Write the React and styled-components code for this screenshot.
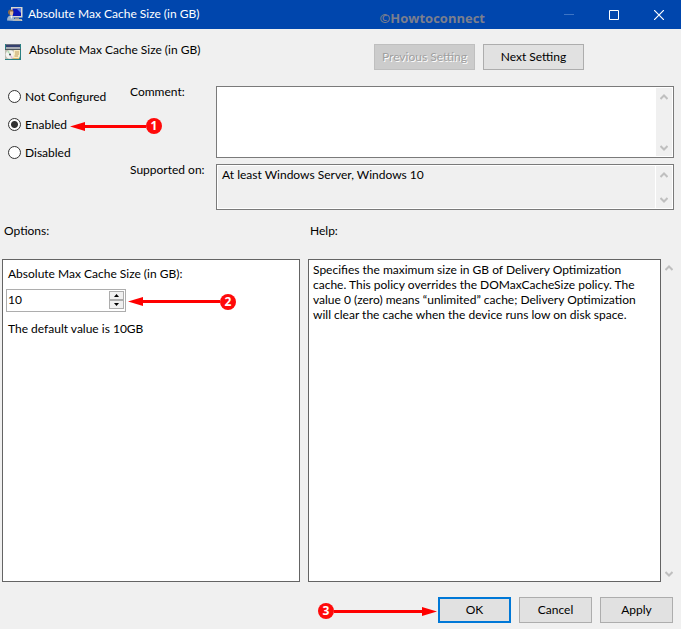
import { useState } from "react";
import styled, { createGlobalStyle } from "styled-components";

const GlobalStyle = createGlobalStyle`
  * {
    box-sizing: border-box;
  }
  body {
    margin: 0;
    background: #f0f0f0;
  }
  body, button, input, textarea {
    font-family: Lato, "Open Sans", sans-serif;
    font-size: 12px;
    line-height: 16px;
    color: #000;
  }
`;

const Window = styled.div`
  display: flex;
  flex-direction: column;
  min-height: 100vh;
`;

const TitleBar = styled.header`
  display: flex;
  align-items: center;
  height: 29px;
  padding-left: 7px;
  background: #0046ad;
  color: #fff;
`;

const Title = styled.h1`
  flex: 1;
  margin: 0 0 0 5px;
  padding-bottom: 2px;
  font-size: 12px;
  font-weight: 400;
`;

const Watermark = styled.span`
  margin-right: 61px;
  padding-top: 6px;
  font-family: "Open Sans", sans-serif;
  font-size: 13px;
  font-weight: 700;
  color: #7b7f8e;
`;

const CaptionButton = styled.button`
  display: flex;
  align-items: center;
  justify-content: center;
  width: 45px;
  height: 27px;
  padding: 0;
  border: none;
  background: transparent;
  color: #fff;
  &:disabled {
    color: #3d74c4;
  }
`;

const PolicyHeader = styled.div`
  display: flex;
  align-items: flex-start;
  gap: 8px;
  padding: 15px 97px 0 5px;
`;

const PolicyName = styled.h2`
  flex: 1;
  margin: 0;
  font-size: 12px;
  font-weight: 400;
  line-height: 12px;
`;

const Button = styled.button`
  width: ${(props) => (props.$wide ? "101px" : "73px")};
  height: 26px;
  padding: 0;
  border: ${(props) => (props.$primary ? "2px solid #0078d7" : "1px solid #adadad")};
  background: #e1e1e1;
  white-space: nowrap;
  &:disabled {
    border-color: #bfbfbf;
    background: #cccccc;
    color: #a0a0a0;
    text-shadow: 1px 1px 0 #fff;
  }
`;

const Settings = styled.div`
  display: grid;
  grid-template-columns: 122px 86px 1fr;
  padding: 16px 7px 0 8px;
`;

const RadioGroup = styled.div`
  display: flex;
  flex-direction: column;
  align-items: flex-start;
  gap: 12px;
  padding-top: 3px;
`;

const RadioLabel = styled.label`
  position: relative;
  display: flex;
  align-items: flex-start;
  gap: 4px;
  white-space: nowrap;
`;

const Radio = styled.input`
  appearance: none;
  width: 13px;
  height: 13px;
  margin: 1px 0 0;
  border: 1px solid #333;
  border-radius: 50%;
  background: #fff;
  &:checked {
    background: radial-gradient(circle, #333 0 3px, #fff 4px);
  }
`;

const Fields = styled.div`
  grid-column: 2 / 4;
  display: grid;
  grid-template-columns: 86px 1fr;
  row-gap: 6px;
`;

const FieldLabel = styled.label`
  line-height: 12px;
`;

const TextFrame = styled.div`
  display: flex;
  height: ${(props) => (props.$short ? "46px" : "72px")};
  padding: 1px;
  border: 1px solid #7a7a7a;
  background: #fff;
`;

const TextArea = styled.textarea`
  flex: 1;
  min-width: 0;
  margin: 0;
  padding: 1px 4px;
  border: none;
  border-right: 1px solid #fff;
  outline: none;
  resize: none;
  background: ${(props) => (props.readOnly ? "#f0f0f0" : "#fff")};
`;

const ScrollTrack = styled.div`
  display: flex;
  flex-direction: column;
  justify-content: space-between;
  width: 16px;
  background: #f0f0f0;
`;

const ScrollButton = styled.button`
  display: flex;
  align-items: center;
  justify-content: center;
  width: 16px;
  height: 17px;
  padding: 0;
  border: none;
  background: transparent;
  color: #bfbfbf;
`;

const Panels = styled.main`
  flex: 1;
  display: grid;
  grid-template-columns: 298fr 369fr;
  grid-template-rows: 36px 1fr;
  column-gap: 8px;
  padding: 13px 4px 0 2px;
`;

const PanelTitle = styled.h3`
  margin: 0;
  padding-left: 2px;
  font-size: 12px;
  font-weight: 400;
`;

const OptionsPanel = styled.section`
  padding: 6px 3px;
  border: 1px solid #646464;
  background: #fff;
`;

const OptionText = styled.p`
  margin: 0;
  padding-left: 2px;
`;

const Spinner = styled.div`
  position: relative;
  display: flex;
  width: 120px;
  height: 23px;
  margin: 7px 0 9px;
  padding: 1px;
  border: 1px solid #adadad;
  background: #fff;
`;

const SpinnerInput = styled.input`
  flex: 1;
  min-width: 0;
  padding: 0 0 2px;
  border: none;
  outline: none;
  background: transparent;
`;

const SpinnerButtons = styled.div`
  display: flex;
  flex-direction: column;
  width: 15px;
`;

const StepButton = styled.button`
  display: flex;
  align-items: center;
  justify-content: center;
  height: 9px;
  padding: 0;
  border: 1px solid #adadad;
  background: #f0f0f0;
`;

const HelpWrap = styled.div`
  display: flex;
`;

const HelpPanel = styled.section`
  flex: 1;
  padding: 2px 14px 2px 4px;
  border: 1px solid #646464;
  background: #fff;
`;

const HelpText = styled.p`
  margin: 0;
  line-height: 15px;
`;

const Footer = styled.footer`
  display: flex;
  justify-content: flex-end;
  gap: 8px;
  padding: 15px 8px 6px;
`;

const ButtonAnchor = styled.div`
  position: relative;
`;

const Callout = styled.div`
  position: absolute;
  top: 0;
  bottom: 0;
  ${(props) => (props.$toRight ? "right: 100%;" : "left: 100%;")}
  display: flex;
  flex-direction: ${(props) => (props.$toRight ? "row-reverse" : "row")};
  align-items: center;
  width: ${(props) => props.$width}px;
  margin-top: 2px;
  padding: 0 ${(props) => (props.$toRight ? 1 : 3)}px;
  pointer-events: none;
`;

const Head = styled.svg`
  flex: none;
  ${(props) => props.$toRight && "transform: scaleX(-1);"}
`;

const Shaft = styled.span`
  flex: 1;
  height: 3px;
  background: #f00;
`;

const Badge = styled.span`
  width: 16px;
  height: 16px;
  border-radius: 50%;
  background: #ff0a0a;
  color: #fff;
  font-family: "Open Sans", sans-serif;
  font-weight: 700;
  text-align: center;
`;

const Arrow = ({ number, width, toRight }) => (
  <Callout $width={width} $toRight={toRight}>
    <Head $toRight={toRight} width="15" height="9" viewBox="0 0 15 9">
      <path d="M0 4.5 15 0v9z" fill="#f00" />
    </Head>
    <Shaft />
    <Badge>{number}</Badge>
  </Callout>
);

const Chevron = ({ down }) => (
  <svg width="8" height="6" viewBox="0 0 8 6">
    <path
      d={down ? "M.5 1 4 4.5 7.5 1" : "M.5 5 4 1.5 7.5 5"}
      fill="none"
      stroke="currentColor"
      strokeWidth="2"
    />
  </svg>
);

const ScrollBar = ({ name }) => (
  <ScrollTrack>
    <ScrollButton type="button" aria-label={`Scroll ${name} up`}>
      <Chevron />
    </ScrollButton>
    <ScrollButton type="button" aria-label={`Scroll ${name} down`}>
      <Chevron down />
    </ScrollButton>
  </ScrollTrack>
);

const ComputerIcon = () => (
  <svg width="16" height="16" viewBox="0 0 16 16">
    <path d="M4 0h11.5v10.5H4z" fill="#d9d8d0" />
    <path d="M5.5 1.5H14V9H5.5z" fill="#0a18b8" />
    <path d="M9.5 1.5H14v4.5z" fill="#4f7bea" />
    <path d="M8 10.5h4V12H8z" fill="#8f9296" />
    <path d="M6 12h8.5l1 2H6z" fill="#d2d0c6" />
    <path d="M7 13h7" stroke="#84868a" strokeWidth=".7" />
    <circle cx="3.8" cy="5.3" r="2.8" fill="#8c6a4c" />
    <path d="M3 4.5h3v3.3L4.4 9 3 7.8z" fill="#e2bd96" />
    <path d="M0 13.5C0 10 1.5 8.5 3.8 8.5S7.5 10 7.5 14z" fill="#9db5cf" />
    <path d="M3.2 8.7 4.5 12l1.2-3z" fill="#f3f3f3" />
  </svg>
);

const PolicyIcon = () => (
  <svg width="16" height="16" viewBox="0 0 16 16">
    <path d="M0 0h16v16H0z" fill="#2a8083" />
    <path d="M1 0h14v6H1z" fill="#a9acb4" />
    <path d="M1 0h14v1H1z" fill="#6f7582" />
    <path d="M1 1h14v2H1z" fill="#35406f" />
    <path d="M0 5h16v1H0z" fill="#4f585c" />
    <path d="M0 6h10v9H0z" fill="#bdbcaf" />
    <circle cx="5" cy="10.5" r="4.3" fill="#f4f4f1" />
    <path d="m5 10.5-3-2.8 2-1.2z" fill="#b3dfb6" />
    <path d="m5 10.5 3 2.7-2 1.3z" fill="#e1bbd9" />
    <circle cx="5" cy="10.5" r="1" fill="#44514f" />
    <path d="M9 6h6v6l-1 3H8z" fill="#f7ecc4" />
    <path d="M10 8h4M10 10h4M9.5 12h3.5" stroke="#b08a4a" strokeWidth=".8" />
    <path d="M8 14h6v1H8z" fill="#d8b86d" />
  </svg>
);

const states = ["Not Configured", "Enabled", "Disabled"];

export default function App() {
  const [state, setState] = useState("Enabled");
  const [comment, setComment] = useState("");
  const [size, setSize] = useState(10);

  return (
    <>
      <GlobalStyle />
      <Window>
        <TitleBar>
          <ComputerIcon />
          <Title>Absolute Max Cache Size (in GB)</Title>
          <Watermark>©Howtoconnect</Watermark>
          <CaptionButton type="button" aria-label="Minimize" disabled>
            <svg width="10" height="10" viewBox="0 0 10 10">
              <path d="M0 4.5h10" stroke="currentColor" />
            </svg>
          </CaptionButton>
          <CaptionButton type="button" aria-label="Maximize">
            <svg width="10" height="10" viewBox="0 0 10 10">
              <path d="M.5.5h9v9h-9z" fill="none" stroke="currentColor" />
            </svg>
          </CaptionButton>
          <CaptionButton type="button" aria-label="Close">
            <svg width="10" height="10" viewBox="0 0 10 10">
              <path d="m0 0 10 10M10 0 0 10" stroke="currentColor" strokeWidth="1.2" />
            </svg>
          </CaptionButton>
        </TitleBar>

        <PolicyHeader>
          <PolicyIcon />
          <PolicyName>Absolute Max Cache Size (in GB)</PolicyName>
          <Button type="button" $wide disabled>
            Previous Setting
          </Button>
          <Button type="button" $wide>
            Next Setting
          </Button>
        </PolicyHeader>

        <Settings>
          <RadioGroup>
            {states.map((name) => (
              <RadioLabel key={name}>
                <Radio
                  type="radio"
                  name="state"
                  checked={state === name}
                  onChange={() => setState(name)}
                />
                {name}
                {name === "Enabled" && <Arrow number={1} width={98} />}
              </RadioLabel>
            ))}
          </RadioGroup>
          <Fields>
            <FieldLabel htmlFor="comment">Comment:</FieldLabel>
            <TextFrame>
              <TextArea
                id="comment"
                value={comment}
                onChange={(e) => setComment(e.target.value)}
              />
              <ScrollBar name="comment" />
            </TextFrame>
            <FieldLabel htmlFor="supported">Supported on:</FieldLabel>
            <TextFrame $short>
              <TextArea
                id="supported"
                readOnly
                value="At least Windows Server, Windows 10"
              />
              <ScrollBar name="supported on" />
            </TextFrame>
          </Fields>
        </Settings>

        <Panels>
          <PanelTitle>Options:</PanelTitle>
          <PanelTitle>Help:</PanelTitle>
          <OptionsPanel>
            <OptionText as="label" htmlFor="size">
              Absolute Max Cache Size (in GB):
            </OptionText>
            <Spinner>
              <SpinnerInput
                id="size"
                inputMode="numeric"
                value={size}
                onChange={(e) => setSize(Number(e.target.value) || 0)}
              />
              <SpinnerButtons>
                <StepButton type="button" aria-label="Increase" onClick={() => setSize(size + 1)}>
                  <svg width="5" height="3" viewBox="0 0 5 3">
                    <path d="M0 3 2.5 0 5 3z" />
                  </svg>
                </StepButton>
                <StepButton
                  type="button"
                  aria-label="Decrease"
                  onClick={() => setSize(Math.max(0, size - 1))}
                >
                  <svg width="5" height="3" viewBox="0 0 5 3">
                    <path d="M0 0 2.5 3 5 0z" />
                  </svg>
                </StepButton>
              </SpinnerButtons>
              <Arrow number={2} width={114} />
            </Spinner>
            <OptionText>The default value is 10GB</OptionText>
          </OptionsPanel>
          <HelpWrap>
            <HelpPanel>
              <HelpText>
                Specifies the maximum size in GB of Delivery Optimization cache. This policy
                overrides the DOMaxCacheSize policy. The value 0 (zero) means “unlimited” cache;
                Delivery Optimization will clear the cache when the device runs low on disk space.
              </HelpText>
            </HelpPanel>
            <ScrollBar name="help" />
          </HelpWrap>
        </Panels>

        <Footer>
          <ButtonAnchor>
            <Button type="button" $primary>
              OK
            </Button>
            <Arrow number={3} width={121} toRight />
          </ButtonAnchor>
          <Button type="button">Cancel</Button>
          <Button type="button">Apply</Button>
        </Footer>
      </Window>
    </>
  );
}
